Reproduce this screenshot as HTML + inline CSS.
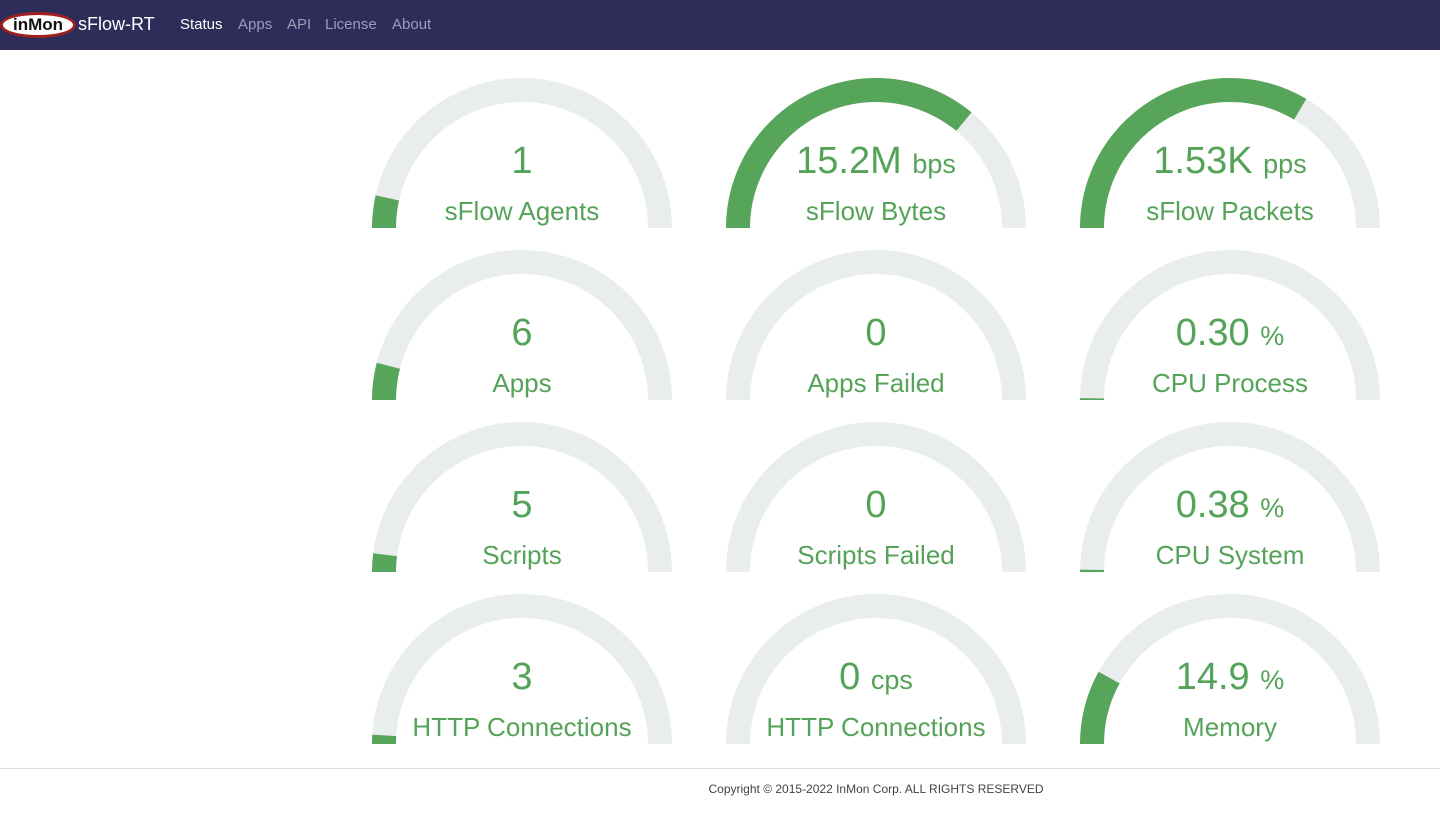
<!DOCTYPE html>
<html><head><meta charset="utf-8"><style>
body{margin:0;background:#fff;font-family:"Liberation Sans",Helvetica,Arial,sans-serif;width:1440px;height:816px;overflow:hidden;position:relative}
.nav{position:absolute;left:0;top:0;width:1440px;height:50px;background:#2e2d5a}
.nav a{position:absolute;top:16px;font-size:15px;color:#9d9cb8;text-decoration:none}
.brand{position:absolute;left:78px;top:14px;font-size:18px;color:#fff}
.logo{position:absolute;left:0;top:12px;width:76px;height:26px;border-radius:50%;background:#fff;border:3px solid #a02020;box-sizing:border-box;font-weight:bold;font-size:17px;color:#111;text-align:center;line-height:20px}
.g{position:absolute;width:300px;height:150px}
.g svg{position:absolute;left:0;top:0}
.v{position:absolute;left:0;width:300px;text-align:center;color:#55a358;font-size:38px;top:62px}
.v small{font-size:27px}
.l{position:absolute;left:0;width:300px;text-align:center;color:#55a358;font-size:26px;top:118px}
.foot{position:absolute;left:0;top:768px;width:1440px;border-top:1px solid #dcdcdc}
.ft{position:absolute;left:0;width:1752px;top:782px;text-align:center;font-size:12px;color:#444}
</style></head><body>
<div class="nav">
<div class="logo">inMon</div>
<div class="brand">sFlow-RT</div>
<a style="left:180px;color:#fff">Status</a>
<a style="left:238px">Apps</a>
<a style="left:287px">API</a>
<a style="left:325px">License</a>
<a style="left:392px">About</a>
</div>

<div class="g" style="left:372px;top:78px"><svg width="300" height="150"><path d="M12 150 A138 138 0 0 1 288 150" fill="none" stroke="#e9edee" stroke-width="24"/><path d="M12 150 A138 138 0 0 1 288 150" pathLength="100" stroke-dasharray="7 200" fill="none" stroke="#57a55a" stroke-width="24"/></svg><div class="v">1</div><div class="l">sFlow Agents</div></div>
<div class="g" style="left:726px;top:78px"><svg width="300" height="150"><path d="M12 150 A138 138 0 0 1 288 150" fill="none" stroke="#e9edee" stroke-width="24"/><path d="M12 150 A138 138 0 0 1 288 150" pathLength="100" stroke-dasharray="72 200" fill="none" stroke="#57a55a" stroke-width="24"/></svg><div class="v">15.2M <small>bps</small></div><div class="l">sFlow Bytes</div></div>
<div class="g" style="left:1080px;top:78px"><svg width="300" height="150"><path d="M12 150 A138 138 0 0 1 288 150" fill="none" stroke="#e9edee" stroke-width="24"/><path d="M12 150 A138 138 0 0 1 288 150" pathLength="100" stroke-dasharray="67 200" fill="none" stroke="#57a55a" stroke-width="24"/></svg><div class="v">1.53K <small>pps</small></div><div class="l">sFlow Packets</div></div>

<div class="g" style="left:372px;top:250px"><svg width="300" height="150"><path d="M12 150 A138 138 0 0 1 288 150" fill="none" stroke="#e9edee" stroke-width="24"/><path d="M12 150 A138 138 0 0 1 288 150" pathLength="100" stroke-dasharray="8 200" fill="none" stroke="#57a55a" stroke-width="24"/></svg><div class="v">6</div><div class="l">Apps</div></div>
<div class="g" style="left:726px;top:250px"><svg width="300" height="150"><path d="M12 150 A138 138 0 0 1 288 150" fill="none" stroke="#e9edee" stroke-width="24"/></svg><div class="v">0</div><div class="l">Apps Failed</div></div>
<div class="g" style="left:1080px;top:250px"><svg width="300" height="150"><path d="M12 150 A138 138 0 0 1 288 150" fill="none" stroke="#e9edee" stroke-width="24"/><path d="M12 150 A138 138 0 0 1 288 150" pathLength="100" stroke-dasharray="0.4 200" fill="none" stroke="#57a55a" stroke-width="24"/></svg><div class="v">0.30 <small>%</small></div><div class="l">CPU Process</div></div>

<div class="g" style="left:372px;top:422px"><svg width="300" height="150"><path d="M12 150 A138 138 0 0 1 288 150" fill="none" stroke="#e9edee" stroke-width="24"/><path d="M12 150 A138 138 0 0 1 288 150" pathLength="100" stroke-dasharray="4 200" fill="none" stroke="#57a55a" stroke-width="24"/></svg><div class="v">5</div><div class="l">Scripts</div></div>
<div class="g" style="left:726px;top:422px"><svg width="300" height="150"><path d="M12 150 A138 138 0 0 1 288 150" fill="none" stroke="#e9edee" stroke-width="24"/></svg><div class="v">0</div><div class="l">Scripts Failed</div></div>
<div class="g" style="left:1080px;top:422px"><svg width="300" height="150"><path d="M12 150 A138 138 0 0 1 288 150" fill="none" stroke="#e9edee" stroke-width="24"/><path d="M12 150 A138 138 0 0 1 288 150" pathLength="100" stroke-dasharray="0.5 200" fill="none" stroke="#57a55a" stroke-width="24"/></svg><div class="v">0.38 <small>%</small></div><div class="l">CPU System</div></div>

<div class="g" style="left:372px;top:594px"><svg width="300" height="150"><path d="M12 150 A138 138 0 0 1 288 150" fill="none" stroke="#e9edee" stroke-width="24"/><path d="M12 150 A138 138 0 0 1 288 150" pathLength="100" stroke-dasharray="2 200" fill="none" stroke="#57a55a" stroke-width="24"/></svg><div class="v">3</div><div class="l">HTTP Connections</div></div>
<div class="g" style="left:726px;top:594px"><svg width="300" height="150"><path d="M12 150 A138 138 0 0 1 288 150" fill="none" stroke="#e9edee" stroke-width="24"/></svg><div class="v">0 <small>cps</small></div><div class="l">HTTP Connections</div></div>
<div class="g" style="left:1080px;top:594px"><svg width="300" height="150"><path d="M12 150 A138 138 0 0 1 288 150" fill="none" stroke="#e9edee" stroke-width="24"/><path d="M12 150 A138 138 0 0 1 288 150" pathLength="100" stroke-dasharray="16 200" fill="none" stroke="#57a55a" stroke-width="24"/></svg><div class="v">14.9 <small>%</small></div><div class="l">Memory</div></div>

<div class="foot"></div>
<div class="ft">Copyright © 2015-2022 InMon Corp. ALL RIGHTS RESERVED</div>
</body></html>
